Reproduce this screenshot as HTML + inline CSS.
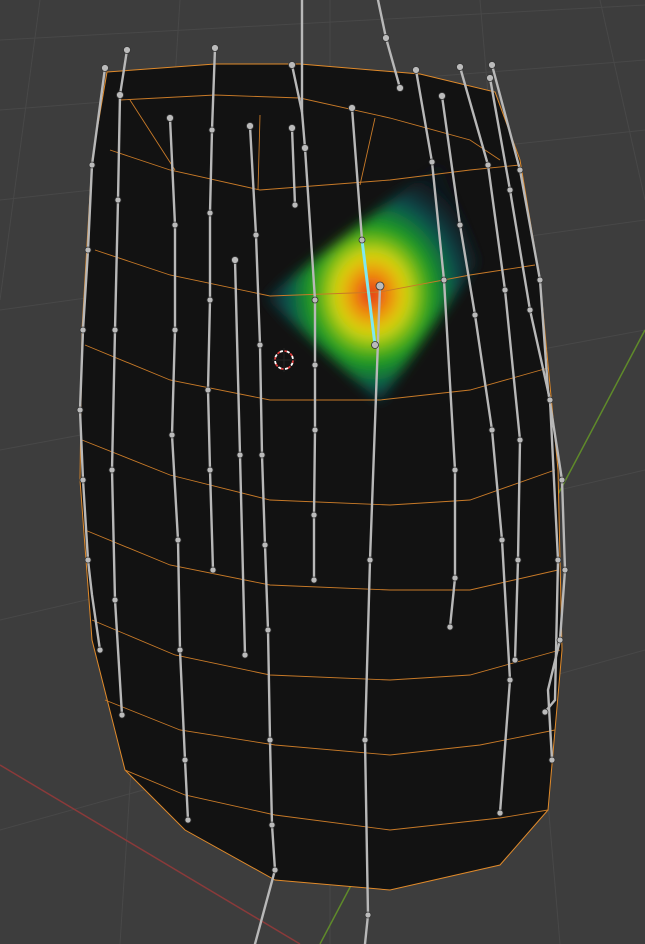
<!DOCTYPE html>
<html><head><meta charset="utf-8"><style>
html,body{margin:0;padding:0;background:#3d3d3d;width:645px;height:944px;overflow:hidden}
</style></head><body>
<svg width="645" height="944" viewBox="0 0 645 944" xmlns="http://www.w3.org/2000/svg">
<defs>
<radialGradient id="heat" cx="0.5" cy="0.55" r="0.55">
<stop offset="0" stop-color="#e0201a"/>
<stop offset="0.15" stop-color="#f08a10"/>
<stop offset="0.3" stop-color="#d8d810"/>
<stop offset="0.5" stop-color="#20a020"/>
<stop offset="0.72" stop-color="#0a5050"/>
<stop offset="1" stop-color="#101828" stop-opacity="0.3"/>
</radialGradient>
<filter id="bl" x="-20%" y="-20%" width="140%" height="140%"><feGaussianBlur stdDeviation="6"/></filter>
</defs>
<rect width="645" height="944" fill="#3d3d3d"/>
<g stroke="#484848" stroke-width="1" fill="none">
<path d="M0 40 L645 5 M0 110 L645 60 M0 200 L645 130 M0 310 L645 220 M0 450 L645 330 M0 620 L645 470 M0 830 L645 650"/>
<path d="M40 0 L0 300 M180 0 L120 944 M330 0 L330 944 M480 0 L560 944 M600 0 L645 200"/>
</g>
<path d="M0 765 L300 944" stroke="#8a3a3a" stroke-width="1.5"/>
<path d="M645 330 L320 944" stroke="#5f8a2a" stroke-width="1.5"/>
<path d="M107 72 L215 64 L300 64 L420 74 L495 92 L520 160 L540 280 L558 470 L562 650 L548 810 L500 865 L390 890 L275 880 L185 830 L125 770 L92 640 L80 480 L82 330 L92 160 Z" fill="#121212" stroke="#e08a2a" stroke-width="1"/>
<polygon points="265,298 440,162 478,262 380,402" fill="url(#heat)" filter="url(#bl)"/>
<g stroke="#c87a28" stroke-width="0.9" fill="none">
<path d="M120 100 L215 95 L300 98 L390 118 L470 140 L500 160"/>
<path d="M110 150 L170 170 L260 190 L390 180 L470 170 L520 165"/>
<path d="M95 250 L170 275 L270 296 L380 292 L470 275 L535 265"/>
<path d="M85 345 L170 380 L270 400 L380 400 L470 390 L548 368"/>
<path d="M82 440 L170 475 L270 500 L390 505 L470 500 L555 470"/>
<path d="M85 530 L170 565 L270 585 L390 590 L470 590 L558 570"/>
<path d="M92 620 L175 655 L270 675 L390 680 L470 675 L560 650"/>
<path d="M105 700 L180 730 L275 745 L390 755 L480 745 L555 730"/>
<path d="M125 770 L185 795 L275 815 L390 830 L500 818 L548 810"/>
<path d="M130 100 L175 170 M375 118 L360 185 M260 115 L258 190"/>
</g>
<g stroke="#b8b8b8" stroke-width="2.4" fill="none" stroke-linecap="round">
<polyline points="105,68 92,165 88,250 83,330 80,410 83,480 88,560 92,595 100,650"/>
<polyline points="127,50 120,95 118,200 115,330 112,470 115,600 122,715"/>
<polyline points="170,118 175,225 175,330 172,435 178,540 180,650 185,760 188,820"/>
<polyline points="215,48 212,130 210,213 210,300 208,390 210,470 213,570"/>
<polyline points="250,126 256,235 260,345 262,455 265,545 268,630 270,740 272,825 275,870 255,944"/>
<polyline points="235,260 240,455 245,655"/>
<polyline points="292,65 302,112 305,148 315,300 315,365 315,430 314,515 314,580"/>
<polyline points="302,0 302,112"/>
<polyline points="292,128 295,205"/>
<polyline points="352,108 362,240"/>
<polyline points="380,286 370,560 365,740 368,915 365,944"/>
<polyline points="378,0 386,38 400,88"/>
<polyline points="416,70 432,162 444,280 455,470 455,578 450,627"/>
<polyline points="442,96 460,225 475,315 492,430 502,540 510,680 500,813"/>
<polyline points="460,67 488,165 505,290 520,440 518,560 515,660"/>
<polyline points="490,78 510,190 530,310 550,400 558,560 555,700 545,712"/>
<polyline points="492,65 520,170 540,280 548,390 562,480 565,570 560,640 548,690 552,760"/>
</g>
<path d="M362 240 L375 345" stroke="#7fe8f0" stroke-width="3"/>
<g fill="#bbb" stroke="#333" stroke-width="0.8">
<circle cx="105" cy="68" r="3.5"/><circle cx="127" cy="50" r="3.5"/><circle cx="120" cy="95" r="3.5"/><circle cx="170" cy="118" r="3.5"/><circle cx="215" cy="48" r="3.5"/><circle cx="250" cy="126" r="3.5"/><circle cx="292" cy="65" r="3.5"/><circle cx="292" cy="128" r="3.5"/><circle cx="305" cy="148" r="3.5"/><circle cx="352" cy="108" r="3.5"/><circle cx="400" cy="88" r="3.5"/><circle cx="386" cy="38" r="3.5"/><circle cx="416" cy="70" r="3.5"/><circle cx="442" cy="96" r="3.5"/><circle cx="460" cy="67" r="3.5"/><circle cx="490" cy="78" r="3.5"/><circle cx="492" cy="65" r="3.5"/><circle cx="235" cy="260" r="3.5"/><circle cx="380" cy="286" r="4"/><circle cx="375" cy="345" r="3.5"/>
<circle cx="92" cy="165" r="3"/><circle cx="88" cy="250" r="3"/><circle cx="83" cy="330" r="3"/><circle cx="80" cy="410" r="3"/><circle cx="83" cy="480" r="3"/><circle cx="88" cy="560" r="3"/><circle cx="100" cy="650" r="3"/>
<circle cx="175" cy="225" r="3"/><circle cx="175" cy="330" r="3"/><circle cx="172" cy="435" r="3"/><circle cx="178" cy="540" r="3"/><circle cx="180" cy="650" r="3"/><circle cx="185" cy="760" r="3"/><circle cx="188" cy="820" r="3"/>
<circle cx="212" cy="130" r="3"/><circle cx="210" cy="213" r="3"/><circle cx="210" cy="300" r="3"/><circle cx="208" cy="390" r="3"/><circle cx="210" cy="470" r="3"/><circle cx="213" cy="570" r="3"/>
<circle cx="256" cy="235" r="3"/><circle cx="260" cy="345" r="3"/><circle cx="262" cy="455" r="3"/><circle cx="265" cy="545" r="3"/><circle cx="268" cy="630" r="3"/><circle cx="270" cy="740" r="3"/><circle cx="272" cy="825" r="3"/><circle cx="275" cy="870" r="3"/>
<circle cx="315" cy="300" r="3"/><circle cx="315" cy="365" r="3"/><circle cx="315" cy="430" r="3"/><circle cx="314" cy="515" r="3"/><circle cx="314" cy="580" r="3"/><circle cx="295" cy="205" r="3"/><circle cx="362" cy="240" r="3"/>
<circle cx="370" cy="560" r="3"/><circle cx="365" cy="740" r="3"/><circle cx="368" cy="915" r="3"/>
<circle cx="432" cy="162" r="3"/><circle cx="444" cy="280" r="3"/><circle cx="455" cy="470" r="3"/><circle cx="455" cy="578" r="3"/><circle cx="450" cy="627" r="3"/>
<circle cx="460" cy="225" r="3"/><circle cx="475" cy="315" r="3"/><circle cx="492" cy="430" r="3"/><circle cx="502" cy="540" r="3"/><circle cx="510" cy="680" r="3"/><circle cx="500" cy="813" r="3"/>
<circle cx="488" cy="165" r="3"/><circle cx="505" cy="290" r="3"/><circle cx="520" cy="440" r="3"/><circle cx="518" cy="560" r="3"/><circle cx="515" cy="660" r="3"/>
<circle cx="510" cy="190" r="3"/><circle cx="530" cy="310" r="3"/><circle cx="550" cy="400" r="3"/><circle cx="558" cy="560" r="3"/><circle cx="545" cy="712" r="3"/>
<circle cx="520" cy="170" r="3"/><circle cx="540" cy="280" r="3"/><circle cx="562" cy="480" r="3"/><circle cx="565" cy="570" r="3"/><circle cx="560" cy="640" r="3"/><circle cx="552" cy="760" r="3"/>
<circle cx="118" cy="200" r="3"/><circle cx="115" cy="330" r="3"/><circle cx="112" cy="470" r="3"/><circle cx="115" cy="600" r="3"/><circle cx="122" cy="715" r="3"/><circle cx="240" cy="455" r="3"/><circle cx="245" cy="655" r="3"/>
</g>
<circle cx="284" cy="360" r="9" fill="none" stroke="#e04040" stroke-width="1.8" stroke-dasharray="4 3"/>
<circle cx="284" cy="360" r="9" fill="none" stroke="#fff" stroke-width="1.8" stroke-dasharray="3 4" stroke-dashoffset="4"/>
<path d="M272 360 L296 360 M284 348 L284 372" stroke="#222" stroke-width="1"/>
</svg>
</body></html>
